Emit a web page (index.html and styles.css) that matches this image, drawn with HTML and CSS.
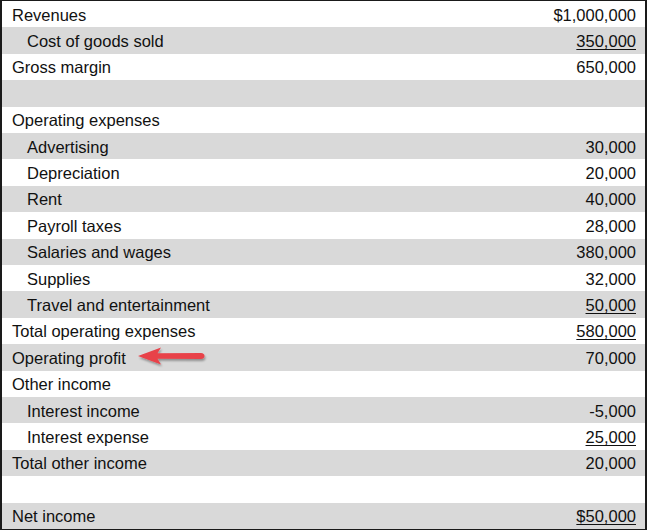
FILE: index.html
```html
<!DOCTYPE html>
<html>
<head>
<meta charset="utf-8">
<link rel="stylesheet" href="styles.css">
</head>
<body>
<div class="sheet">
  <div class="row"><span class="label">Revenues</span><span class="val">$1,000,000</span></div>
  <div class="row shade"><span class="label ind">Cost of goods sold</span><span class="val ul">350,000</span></div>
  <div class="row"><span class="label">Gross margin</span><span class="val">650,000</span></div>
  <div class="row shade"><span class="label"></span><span class="val"></span></div>
  <div class="row"><span class="label">Operating expenses</span><span class="val"></span></div>
  <div class="row shade"><span class="label ind">Advertising</span><span class="val">30,000</span></div>
  <div class="row"><span class="label ind">Depreciation</span><span class="val">20,000</span></div>
  <div class="row shade"><span class="label ind">Rent</span><span class="val">40,000</span></div>
  <div class="row"><span class="label ind">Payroll taxes</span><span class="val">28,000</span></div>
  <div class="row shade"><span class="label ind">Salaries and wages</span><span class="val">380,000</span></div>
  <div class="row"><span class="label ind">Supplies</span><span class="val">32,000</span></div>
  <div class="row shade"><span class="label ind">Travel and entertainment</span><span class="val ul">50,000</span></div>
  <div class="row"><span class="label">Total operating expenses</span><span class="val ul">580,000</span></div>
  <div class="row shade arrow-row"><span class="label">Operating profit</span><span class="val">70,000</span>
    <svg class="arrow" width="78" height="26" viewBox="0 0 78 26">
      <defs>
        <filter id="sh" x="-20%" y="-50%" width="140%" height="200%">
          <feGaussianBlur in="SourceAlpha" stdDeviation="1.2"/>
          <feOffset dx="1" dy="2" result="b"/>
          <feComponentTransfer><feFuncA type="linear" slope="0.35"/></feComponentTransfer>
          <feMerge><feMergeNode/><feMergeNode in="SourceGraphic"/></feMerge>
        </filter>
      </defs>
      <g filter="url(#sh)">
        <path d="M2 12 L25 3.5 L21.5 9.3 L65 9 Q68.5 9.3 68.5 12 Q68.5 14.7 65 15 L21.5 14.7 L25 20.5 Z" fill="#e8434a"/>
      </g>
    </svg>
  </div>
  <div class="row"><span class="label">Other income</span><span class="val"></span></div>
  <div class="row shade"><span class="label ind">Interest income</span><span class="val">-5,000</span></div>
  <div class="row"><span class="label ind">Interest expense</span><span class="val ul">25,000</span></div>
  <div class="row shade"><span class="label">Total other income</span><span class="val">20,000</span></div>
  <div class="row"><span class="label"></span><span class="val"></span></div>
  <div class="row shade"><span class="label">Net income</span><span class="val ul">$50,000</span></div>
</div>
</body>
</html>
```
FILE: styles.css
```css
html, body {
  margin: 0;
  padding: 0;
  background: #ffffff;
}
.sheet {
  box-sizing: border-box;
  width: 647px;
  height: 530px;
  border: 1px solid #1a1a1a;
  border-left-width: 2px;
  border-right-width: 2px;
  display: grid;
  grid-template-rows: repeat(20, 1fr);
  font-family: "Liberation Sans", Arial, sans-serif;
  font-size: 16.5px;
  color: #111;
}
.row {
  display: flex;
  align-items: center;
  justify-content: space-between;
  padding: 2px 9px 0 10px;
  position: relative;
}
.shade {
  background: #d9d9d9;
}
.label.ind {
  padding-left: 15px;
}
.ul {
  text-decoration: underline;
  text-decoration-thickness: 1px;
  text-underline-offset: 2px;
}
.arrow {
  position: absolute;
  left: 134px;
  top: 0px;
}
```
